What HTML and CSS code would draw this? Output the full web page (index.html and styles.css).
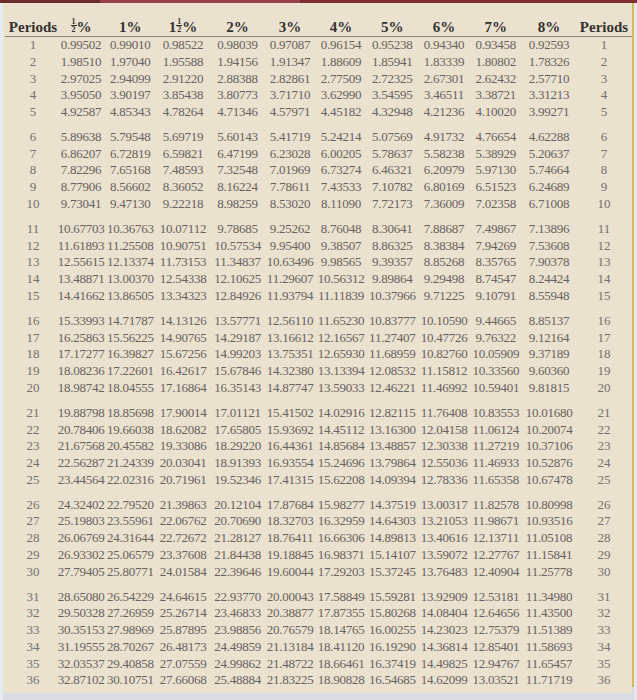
FILE: index.html
```html
<!DOCTYPE html>
<html>
<head>
<meta charset="utf-8">
<link rel="stylesheet" href="styles.css">
</head>
<body>
<div class="topband"></div>
<div class="frame">
  <div class="strip-l"></div>
  <div class="sheet">
    <div class="row head">
      <span>Periods</span>
      <span><span class="frac"><span class="num">1</span><span class="den">2</span></span>%</span>
      <span>1%</span>
      <span>1<span class="frac"><span class="num">1</span><span class="den">2</span></span>%</span>
      <span>2%</span>
      <span>3%</span>
      <span>4%</span>
      <span>5%</span>
      <span>6%</span>
      <span>7%</span>
      <span>8%</span>
      <span>Periods</span>
    </div>
    <div class="rule"></div>
    <div class="group">
      <div class="row"><span class="p">1</span><span>0.99502</span><span>0.99010</span><span>0.98522</span><span>0.98039</span><span>0.97087</span><span>0.96154</span><span>0.95238</span><span>0.94340</span><span>0.93458</span><span>0.92593</span><span class="p">1</span></div>
      <div class="row"><span class="p">2</span><span>1.98510</span><span>1.97040</span><span>1.95588</span><span>1.94156</span><span>1.91347</span><span>1.88609</span><span>1.85941</span><span>1.83339</span><span>1.80802</span><span>1.78326</span><span class="p">2</span></div>
      <div class="row"><span class="p">3</span><span>2.97025</span><span>2.94099</span><span>2.91220</span><span>2.88388</span><span>2.82861</span><span>2.77509</span><span>2.72325</span><span>2.67301</span><span>2.62432</span><span>2.57710</span><span class="p">3</span></div>
      <div class="row"><span class="p">4</span><span>3.95050</span><span>3.90197</span><span>3.85438</span><span>3.80773</span><span>3.71710</span><span>3.62990</span><span>3.54595</span><span>3.46511</span><span>3.38721</span><span>3.31213</span><span class="p">4</span></div>
      <div class="row"><span class="p">5</span><span>4.92587</span><span>4.85343</span><span>4.78264</span><span>4.71346</span><span>4.57971</span><span>4.45182</span><span>4.32948</span><span>4.21236</span><span>4.10020</span><span>3.99271</span><span class="p">5</span></div>
    </div>
    <div class="group">
      <div class="row"><span class="p">6</span><span>5.89638</span><span>5.79548</span><span>5.69719</span><span>5.60143</span><span>5.41719</span><span>5.24214</span><span>5.07569</span><span>4.91732</span><span>4.76654</span><span>4.62288</span><span class="p">6</span></div>
      <div class="row"><span class="p">7</span><span>6.86207</span><span>6.72819</span><span>6.59821</span><span>6.47199</span><span>6.23028</span><span>6.00205</span><span>5.78637</span><span>5.58238</span><span>5.38929</span><span>5.20637</span><span class="p">7</span></div>
      <div class="row"><span class="p">8</span><span>7.82296</span><span>7.65168</span><span>7.48593</span><span>7.32548</span><span>7.01969</span><span>6.73274</span><span>6.46321</span><span>6.20979</span><span>5.97130</span><span>5.74664</span><span class="p">8</span></div>
      <div class="row"><span class="p">9</span><span>8.77906</span><span>8.56602</span><span>8.36052</span><span>8.16224</span><span>7.78611</span><span>7.43533</span><span>7.10782</span><span>6.80169</span><span>6.51523</span><span>6.24689</span><span class="p">9</span></div>
      <div class="row"><span class="p">10</span><span>9.73041</span><span>9.47130</span><span>9.22218</span><span>8.98259</span><span>8.53020</span><span>8.11090</span><span>7.72173</span><span>7.36009</span><span>7.02358</span><span>6.71008</span><span class="p">10</span></div>
    </div>
    <div class="group">
      <div class="row"><span class="p">11</span><span>10.67703</span><span>10.36763</span><span>10.07112</span><span>9.78685</span><span>9.25262</span><span>8.76048</span><span>8.30641</span><span>7.88687</span><span>7.49867</span><span>7.13896</span><span class="p">11</span></div>
      <div class="row"><span class="p">12</span><span>11.61893</span><span>11.25508</span><span>10.90751</span><span>10.57534</span><span>9.95400</span><span>9.38507</span><span>8.86325</span><span>8.38384</span><span>7.94269</span><span>7.53608</span><span class="p">12</span></div>
      <div class="row"><span class="p">13</span><span>12.55615</span><span>12.13374</span><span>11.73153</span><span>11.34837</span><span>10.63496</span><span>9.98565</span><span>9.39357</span><span>8.85268</span><span>8.35765</span><span>7.90378</span><span class="p">13</span></div>
      <div class="row"><span class="p">14</span><span>13.48871</span><span>13.00370</span><span>12.54338</span><span>12.10625</span><span>11.29607</span><span>10.56312</span><span>9.89864</span><span>9.29498</span><span>8.74547</span><span>8.24424</span><span class="p">14</span></div>
      <div class="row"><span class="p">15</span><span>14.41662</span><span>13.86505</span><span>13.34323</span><span>12.84926</span><span>11.93794</span><span>11.11839</span><span>10.37966</span><span>9.71225</span><span>9.10791</span><span>8.55948</span><span class="p">15</span></div>
    </div>
    <div class="group">
      <div class="row"><span class="p">16</span><span>15.33993</span><span>14.71787</span><span>14.13126</span><span>13.57771</span><span>12.56110</span><span>11.65230</span><span>10.83777</span><span>10.10590</span><span>9.44665</span><span>8.85137</span><span class="p">16</span></div>
      <div class="row"><span class="p">17</span><span>16.25863</span><span>15.56225</span><span>14.90765</span><span>14.29187</span><span>13.16612</span><span>12.16567</span><span>11.27407</span><span>10.47726</span><span>9.76322</span><span>9.12164</span><span class="p">17</span></div>
      <div class="row"><span class="p">18</span><span>17.17277</span><span>16.39827</span><span>15.67256</span><span>14.99203</span><span>13.75351</span><span>12.65930</span><span>11.68959</span><span>10.82760</span><span>10.05909</span><span>9.37189</span><span class="p">18</span></div>
      <div class="row"><span class="p">19</span><span>18.08236</span><span>17.22601</span><span>16.42617</span><span>15.67846</span><span>14.32380</span><span>13.13394</span><span>12.08532</span><span>11.15812</span><span>10.33560</span><span>9.60360</span><span class="p">19</span></div>
      <div class="row"><span class="p">20</span><span>18.98742</span><span>18.04555</span><span>17.16864</span><span>16.35143</span><span>14.87747</span><span>13.59033</span><span>12.46221</span><span>11.46992</span><span>10.59401</span><span>9.81815</span><span class="p">20</span></div>
    </div>
    <div class="group">
      <div class="row"><span class="p">21</span><span>19.88798</span><span>18.85698</span><span>17.90014</span><span>17.01121</span><span>15.41502</span><span>14.02916</span><span>12.82115</span><span>11.76408</span><span>10.83553</span><span>10.01680</span><span class="p">21</span></div>
      <div class="row"><span class="p">22</span><span>20.78406</span><span>19.66038</span><span>18.62082</span><span>17.65805</span><span>15.93692</span><span>14.45112</span><span>13.16300</span><span>12.04158</span><span>11.06124</span><span>10.20074</span><span class="p">22</span></div>
      <div class="row"><span class="p">23</span><span>21.67568</span><span>20.45582</span><span>19.33086</span><span>18.29220</span><span>16.44361</span><span>14.85684</span><span>13.48857</span><span>12.30338</span><span>11.27219</span><span>10.37106</span><span class="p">23</span></div>
      <div class="row"><span class="p">24</span><span>22.56287</span><span>21.24339</span><span>20.03041</span><span>18.91393</span><span>16.93554</span><span>15.24696</span><span>13.79864</span><span>12.55036</span><span>11.46933</span><span>10.52876</span><span class="p">24</span></div>
      <div class="row"><span class="p">25</span><span>23.44564</span><span>22.02316</span><span>20.71961</span><span>19.52346</span><span>17.41315</span><span>15.62208</span><span>14.09394</span><span>12.78336</span><span>11.65358</span><span>10.67478</span><span class="p">25</span></div>
    </div>
    <div class="group">
      <div class="row"><span class="p">26</span><span>24.32402</span><span>22.79520</span><span>21.39863</span><span>20.12104</span><span>17.87684</span><span>15.98277</span><span>14.37519</span><span>13.00317</span><span>11.82578</span><span>10.80998</span><span class="p">26</span></div>
      <div class="row"><span class="p">27</span><span>25.19803</span><span>23.55961</span><span>22.06762</span><span>20.70690</span><span>18.32703</span><span>16.32959</span><span>14.64303</span><span>13.21053</span><span>11.98671</span><span>10.93516</span><span class="p">27</span></div>
      <div class="row"><span class="p">28</span><span>26.06769</span><span>24.31644</span><span>22.72672</span><span>21.28127</span><span>18.76411</span><span>16.66306</span><span>14.89813</span><span>13.40616</span><span>12.13711</span><span>11.05108</span><span class="p">28</span></div>
      <div class="row"><span class="p">29</span><span>26.93302</span><span>25.06579</span><span>23.37608</span><span>21.84438</span><span>19.18845</span><span>16.98371</span><span>15.14107</span><span>13.59072</span><span>12.27767</span><span>11.15841</span><span class="p">29</span></div>
      <div class="row"><span class="p">30</span><span>27.79405</span><span>25.80771</span><span>24.01584</span><span>22.39646</span><span>19.60044</span><span>17.29203</span><span>15.37245</span><span>13.76483</span><span>12.40904</span><span>11.25778</span><span class="p">30</span></div>
    </div>
    <div class="group">
      <div class="row"><span class="p">31</span><span>28.65080</span><span>26.54229</span><span>24.64615</span><span>22.93770</span><span>20.00043</span><span>17.58849</span><span>15.59281</span><span>13.92909</span><span>12.53181</span><span>11.34980</span><span class="p">31</span></div>
      <div class="row"><span class="p">32</span><span>29.50328</span><span>27.26959</span><span>25.26714</span><span>23.46833</span><span>20.38877</span><span>17.87355</span><span>15.80268</span><span>14.08404</span><span>12.64656</span><span>11.43500</span><span class="p">32</span></div>
      <div class="row"><span class="p">33</span><span>30.35153</span><span>27.98969</span><span>25.87895</span><span>23.98856</span><span>20.76579</span><span>18.14765</span><span>16.00255</span><span>14.23023</span><span>12.75379</span><span>11.51389</span><span class="p">33</span></div>
      <div class="row"><span class="p">34</span><span>31.19555</span><span>28.70267</span><span>26.48173</span><span>24.49859</span><span>21.13184</span><span>18.41120</span><span>16.19290</span><span>14.36814</span><span>12.85401</span><span>11.58693</span><span class="p">34</span></div>
      <div class="row"><span class="p">35</span><span>32.03537</span><span>29.40858</span><span>27.07559</span><span>24.99862</span><span>21.48722</span><span>18.66461</span><span>16.37419</span><span>14.49825</span><span>12.94767</span><span>11.65457</span><span class="p">35</span></div>
      <div class="row"><span class="p">36</span><span>32.87102</span><span>30.10751</span><span>27.66068</span><span>25.48884</span><span>21.83225</span><span>18.90828</span><span>16.54685</span><span>14.62099</span><span>13.03521</span><span>11.71719</span><span class="p">36</span></div>
    </div>
  </div>
  <div class="gold"></div>
  <div class="strip-r"></div>
</div>
</body>
</html>
```
FILE: styles.css
```css
html, body {
  margin: 0;
  padding: 0;
}
body {
  width: 637px;
  height: 700px;
  overflow: hidden;
  background: #d9dde2;
  font-family: "Liberation Serif", "Times New Roman", serif;
}
.topband {
  height: 3px;
  background: linear-gradient(90deg, #6a2c2c 0 100px, #93404a 100px 300px, #7d2f31 300px);
}
.frame {
  display: flex;
  height: 697px;
}
.strip-l {
  width: 3px;
  background: #e6ebf1;
}
.sheet {
  width: 629px;
  height: 690px;
  background: #eae1cf;
  padding-left: 6px;
  box-sizing: border-box;
}
.gold {
  width: 2px;
  height: 684px;
  background: #d8b957;
}
.strip-r {
  width: 3px;
  background: #e3e8ef;
}
.row {
  display: grid;
  grid-template-columns: 48px 48px 50.5px 55px 54px 51px 51px 51.5px 52px 51.5px 55px 55px;
  height: 16.75px;
  line-height: 16.75px;
  font-size: 13px;
  letter-spacing: -0.25px;
  color: #67625d;
  white-space: nowrap;
}
.row > span {
  display: flex;
  justify-content: center;
}
.row .p {
  color: #75706a;
  letter-spacing: 0;
}
.head {
  margin-top: 16px;
  height: 17px;
  line-height: 17px;
  font-size: 15px;
  letter-spacing: 0;
  font-weight: bold;
  color: #343230;
}
.head > span {
  align-items: center;
}
.head .frac {
  display: inline-flex;
  flex-direction: column;
  font-size: 8px;
  line-height: 7px;
  margin-top: -4px;
  text-align: center;
}
.frac .num {
  border-bottom: 1px solid #343230;
  padding: 0 1px;
}
.rule {
  height: 1px;
  width: 627px;
  margin-left: -4px;
  background: #8a847e;
}
.group {
  margin-bottom: 8.2px;
}
```
